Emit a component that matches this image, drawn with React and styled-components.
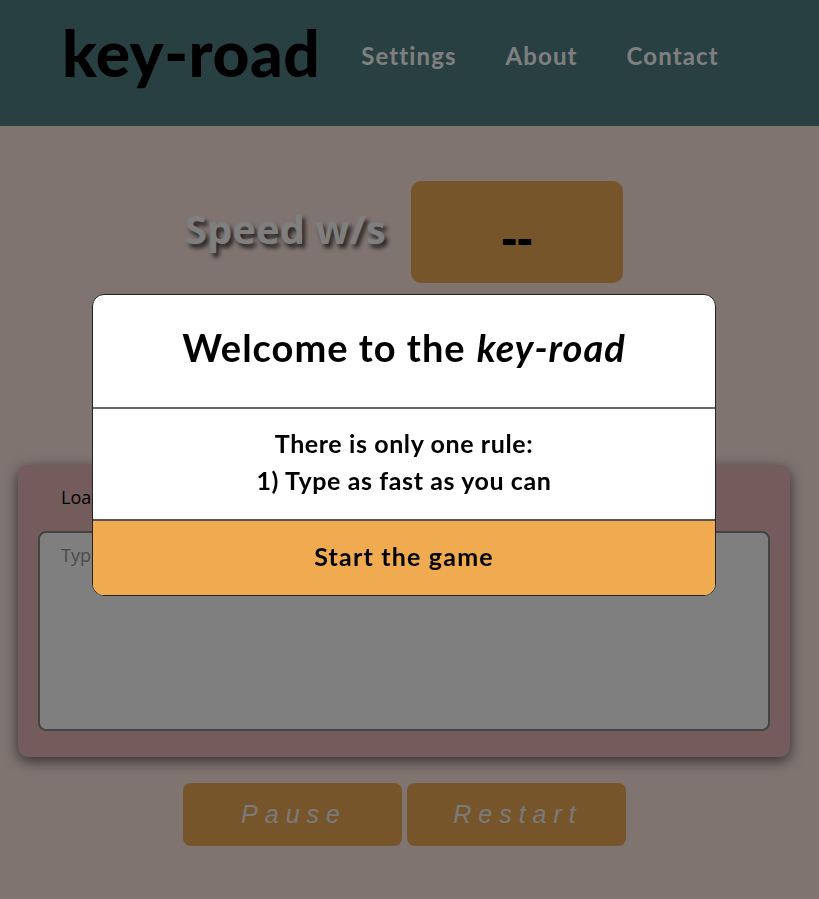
import React, { useState } from "react";
import styled, { createGlobalStyle } from "styled-components";

const GlobalStyle = createGlobalStyle`
  * { box-sizing: border-box; }
  html, body {
    margin: 0;
    padding: 0;
    background: #fee8e0;
    font-family: "Lato", "Noto Sans", sans-serif;
  }
`;

const Header = styled.header`
  height: 126px;
  background: #528086;
  display: flex;
  align-items: center;
  padding-left: 62px;
  padding-bottom: 16px;
  gap: 41px;
`;

const Logo = styled.h1`
  margin: 0 0 6px;
  font-family: "Lato", sans-serif;
  font-weight: 900;
  font-size: 64px;
  letter-spacing: 0.5px;
  color: #000;
`;

const Nav = styled.nav`
  display: flex;
  gap: 49px;
  a {
    font-weight: 700;
    font-size: 24px;
    letter-spacing: 1.1px;
    color: #fefefe;
    text-decoration: none;
  }
`;

const Main = styled.main`
  padding: 55px 29px 50px 18px;
  display: flex;
  flex-direction: column;
  align-items: center;
`;

const SpeedRow = styled.div`
  display: flex;
  align-items: center;
  gap: 25px;
`;

const SpeedLabel = styled.span`
  font-family: "Open Sans", sans-serif;
  font-weight: 700;
  font-size: 40px;
  color: #fff;
  text-shadow: 3px 4px 4px rgba(0, 0, 0, 0.7);
  margin-top: -8px;
`;

const SpeedBox = styled.div`
  width: 212px;
  height: 102px;
  border-radius: 10px;
  background: #eeaa54;
  display: flex;
  align-items: center;
  justify-content: center;
  font-family: "Open Sans", sans-serif;
  font-weight: 700;
  font-size: 48px;
  padding-top: 8px;
  color: #000;
`;

const Card = styled.section`
  width: 100%;
  margin-top: 182px;
  background: #e8b8b8;
  border-radius: 10px;
  padding: 20px 20px 26px;
  box-shadow: 0 4px 14px rgba(0, 0, 0, 0.6);
`;

const LoadLabel = styled.div`
  font-family: "Open Sans", sans-serif;
  font-size: 18px;
  color: #000;
  padding-left: 23px;
  margin-bottom: 22px;
`;

const TextArea = styled.textarea`
  display: block;
  width: 100%;
  height: 200px;
  resize: none;
  border: 2px solid #888;
  border-radius: 8px;
  background: #fff;
  font-family: "Open Sans", sans-serif;
  font-size: 18px;
  padding: 10px 21px;
  &::placeholder { color: #949494; }
`;

const Controls = styled.div`
  display: flex;
  gap: 5px;
  margin-top: 26px;
`;

const ControlButton = styled.button`
  width: 219px;
  height: 63px;
  border: none;
  border-radius: 8px;
  background: #eeaa54;
  font-family: "Liberation Sans", Arial, sans-serif;
  font-style: italic;
  font-size: 25px;
  letter-spacing: 7px;
  padding-left: 10px;
  color: #f4f4f4;
  cursor: pointer;
`;

const Overlay = styled.div`
  position: fixed;
  inset: 0;
  background: rgba(0, 0, 0, 0.5);
`;

const Modal = styled.div`
  position: fixed;
  top: 294px;
  left: 92px;
  width: 624px;
  background: #fff;
  border: 1px solid #222;
  border-radius: 12px;
  overflow: hidden;
  display: flex;
  flex-direction: column;
`;

const ModalTitle = styled.h2`
  margin: 0;
  height: 114px;
  border-bottom: 2px solid #666;
  display: flex;
  align-items: center;
  justify-content: center;
  padding-bottom: 8px;
  font-weight: 700;
  font-size: 38px;
  letter-spacing: 1px;
  color: #000;
  em { font-style: italic; margin-left: 11px; }
`;

const ModalBody = styled.div`
  height: 112px;
  border-bottom: 2px solid #555;
  display: flex;
  flex-direction: column;
  align-items: center;
  justify-content: center;
  padding-bottom: 5px;
  font-weight: 700;
  font-size: 25px;
  letter-spacing: 0.6px;
  line-height: 37px;
  color: #000;
`;

const StartButton = styled.button`
  height: 74px;
  border: none;
  background: #f0aa4f;
  font-family: "Lato", sans-serif;
  font-weight: 700;
  font-size: 25px;
  letter-spacing: 1.2px;
  color: #000;
  cursor: pointer;
  padding-bottom: 6px;
`;

const App = () => {
  const [open, setOpen] = useState(true);

  return (
    <>
      <GlobalStyle />
      <Header>
        <Logo>key-road</Logo>
        <Nav>
          <a href="#settings">Settings</a>
          <a href="#about">About</a>
          <a href="#contact">Contact</a>
        </Nav>
      </Header>
      <Main>
        <SpeedRow>
          <SpeedLabel>Speed w/s</SpeedLabel>
          <SpeedBox>--</SpeedBox>
        </SpeedRow>
        <Card>
          <LoadLabel>Load your own text</LoadLabel>
          <TextArea placeholder="Type here to start..." />
        </Card>
        <Controls>
          <ControlButton>Pause</ControlButton>
          <ControlButton>Restart</ControlButton>
        </Controls>
      </Main>
      {open && (
        <>
          <Overlay />
          <Modal>
            <ModalTitle>
              Welcome to the <em>key-road</em>
            </ModalTitle>
            <ModalBody>
              <div>There is only one rule:</div>
              <div>1) Type as fast as you can</div>
            </ModalBody>
            <StartButton onClick={() => setOpen(false)}>Start the game</StartButton>
          </Modal>
        </>
      )}
    </>
  );
};

export default App;
